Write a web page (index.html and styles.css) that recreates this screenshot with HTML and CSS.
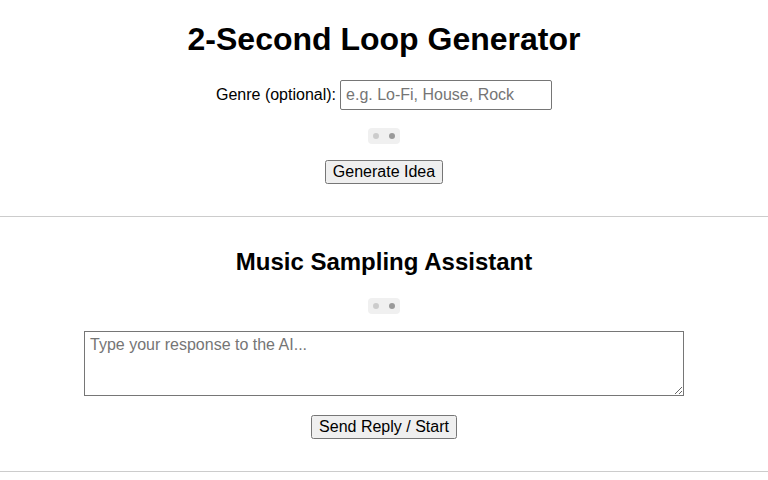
FILE: index.html
```html
<!DOCTYPE html>
<html lang="en">
<head>
    <meta charset="UTF-8">
    <meta name="viewport" content="width=device-width, initial-scale=1.0">
    <title>2-Second Loop Generator</title>
    <link rel="stylesheet" href="styles.css">
</head>
<body>
    <div class="section">
        <h1>2-Second Loop Generator</h1>

        <div class="field">
            <label for="genre">Genre (optional):</label>
            <input type="text" id="genre" placeholder="e.g. Lo-Fi, House, Rock">
        </div>

        <div class="loader">
            <span class="dot"></span>
            <span class="dot dark"></span>
        </div>

        <button class="action">Generate Idea</button>
    </div>

    <div class="section">
        <h2>Music Sampling Assistant</h2>

        <div class="loader">
            <span class="dot"></span>
            <span class="dot dark"></span>
        </div>

        <textarea id="reply" placeholder="Type your response to the AI..."></textarea>

        <button class="action">Send Reply / Start</button>
    </div>
</body>
</html>
```

FILE: styles.css
```css
body {
    font-family: "Liberation Sans", Arial, sans-serif;
    margin: 0;
    color: #000;
    background-color: #fff;
}

.section {
    text-align: center;
    border-bottom: 1px solid #ccc;
    padding-bottom: 32px;
}

h1 {
    font-size: 32px;
    margin: 21px 0 22px;
}

h2 {
    font-size: 24px;
    margin: 31px 0 22px;
}

.field {
    display: flex;
    justify-content: center;
    align-items: center;
    gap: 4px;
    font-size: 16px;
}

.field input {
    width: 212px;
    height: 30px;
    box-sizing: border-box;
    padding: 5px;
    border: 1px solid #767676;
    border-radius: 2px;
    font-family: inherit;
    font-size: 16px;
}

.loader {
    display: flex;
    align-items: center;
    gap: 10px;
    width: 32px;
    height: 16px;
    box-sizing: border-box;
    padding: 0 5px;
    margin: 17px auto 17px;
    background-color: #f0f0f0;
    border-radius: 4px;
}

.field + .loader {
    margin-top: 18px;
    margin-bottom: 16px;
}

.dot {
    width: 6px;
    height: 6px;
    border-radius: 50%;
    background-color: #ccc;
}

.dot.dark {
    background-color: #999;
}

textarea {
    display: block;
    width: 600px;
    height: 65px;
    box-sizing: border-box;
    margin: 0 auto 19px;
    padding: 4px 5px;
    border: 1px solid #767676;
    font-family: inherit;
    font-size: 16px;
}

.action {
    font-family: inherit;
    font-size: 16px;
    height: 24px;
    vertical-align: top;
}
```
